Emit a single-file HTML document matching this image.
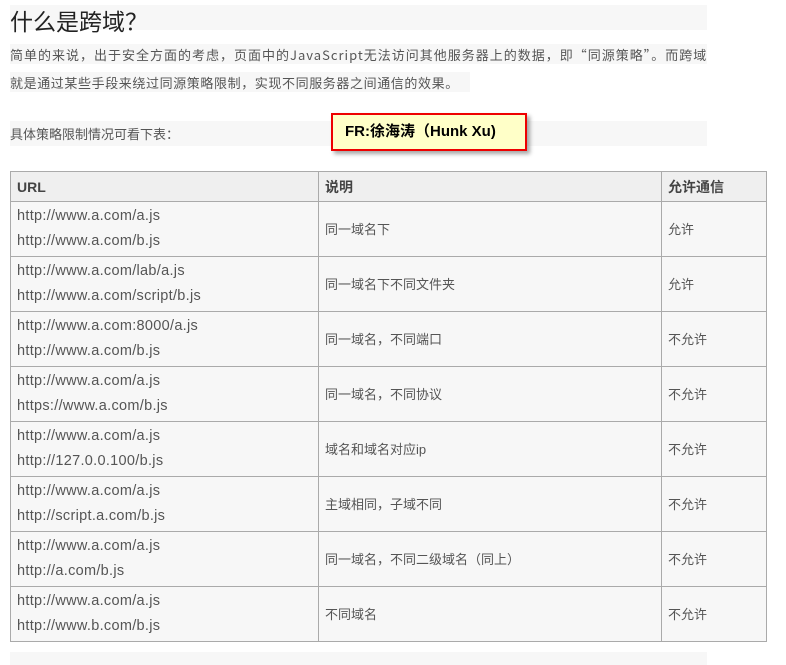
<!DOCTYPE html>
<html><head><meta charset="utf-8"><style>
body{margin:0;background:#fff;width:786px;height:665px;overflow:hidden;position:relative;font-family:"Liberation Sans","Noto Sans CJK SC",sans-serif;color:#555;font-size:13px}
.s{position:absolute;background:#f7f7f7;left:10px}
.t{position:absolute;left:10px;white-space:nowrap}
table{position:absolute;left:10px;top:171px;width:757px;border-collapse:collapse;background:#f7f7f7}
td,th{border:1px solid #aaa;padding:0 6px;text-align:left;vertical-align:middle;font-size:13px;color:#555}
td:first-child{font-size:14.5px;letter-spacing:0.3px}
th{height:29px;background:#efefef;font-weight:bold;color:#444;font-size:14px}
td{height:54px;line-height:25px}
.tip{position:absolute;left:331px;top:113px;background:#ffffc8;border:2px solid #e00;box-shadow:3px 3px 4px rgba(0,0,0,.35);font-weight:bold;color:#000;font-size:15px;line-height:34px;padding-left:12px;box-sizing:border-box;width:196px;height:38px}
</style></head><body>
<div class="s" style="top:5px;width:697px;height:25px"></div>
<div class="t" style="top:3px;font-size:23px;color:#222;font-family:'Noto Sans CJK SC',sans-serif">什么是跨域？</div>
<div class="s" style="top:44px;width:697px;height:20px"></div>
<div class="t" style="top:45px;letter-spacing:1px;font-family:'Noto Sans CJK SC',sans-serif;font-size:13px">简单的来说，出于安全方面的考虑，页面中的JavaScript无法访问其他服务器上的数据，即“同源策略”。而跨域</div>
<div class="s" style="top:72px;width:460px;height:20px"></div>
<div class="t" style="top:73px;letter-spacing:0.6px;font-family:'Noto Sans CJK SC',sans-serif">就是通过某些手段来绕过同源策略限制，实现不同服务器之间通信的效果。</div>
<div class="s" style="top:121px;width:697px;height:25px"></div>
<div class="t" style="top:124px;font-family:'Noto Sans CJK SC',sans-serif">具体策略限制情况可看下表：</div>
<div class="tip">FR:徐海涛（Hunk Xu)</div>
<table>
<tr><th style="width:295px">URL</th><th style="width:330px">说明</th><th>允许通信</th></tr>
<tr><td>http://www.a.com/a.js<br>http://www.a.com/b.js</td><td>同一域名下</td><td>允许</td></tr>
<tr><td>http://www.a.com/lab/a.js<br>http://www.a.com/script/b.js</td><td>同一域名下不同文件夹</td><td>允许</td></tr>
<tr><td>http://www.a.com:8000/a.js<br>http://www.a.com/b.js</td><td>同一域名，不同端口</td><td>不允许</td></tr>
<tr><td>http://www.a.com/a.js<br>https://www.a.com/b.js</td><td>同一域名，不同协议</td><td>不允许</td></tr>
<tr><td>http://www.a.com/a.js<br>http://127.0.0.100/b.js</td><td>域名和域名对应ip</td><td>不允许</td></tr>
<tr><td>http://www.a.com/a.js<br>http://script.a.com/b.js</td><td>主域相同，子域不同</td><td>不允许</td></tr>
<tr><td>http://www.a.com/a.js<br>http://a.com/b.js</td><td>同一域名，不同二级域名（同上）</td><td>不允许</td></tr>
<tr><td>http://www.a.com/a.js<br>http://www.b.com/b.js</td><td>不同域名</td><td>不允许</td></tr>
</table>
<div class="s" style="top:652px;width:697px;height:13px"></div>
</body></html>
